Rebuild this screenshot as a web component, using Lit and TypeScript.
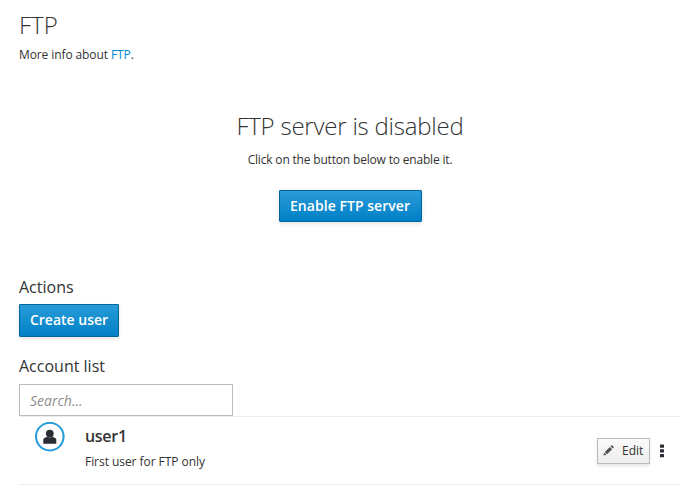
import { LitElement, html, css } from "lit";
import { customElement } from "lit/decorators.js";

@customElement("app-root")
export class AppRoot extends LitElement {
  static styles = css`
    :host {
      display: block;
      width: 690px;
      height: 498px;
      overflow: hidden;
      background: #fff;
      color: #333;
      font-family: "Open Sans", sans-serif;
      font-size: 12px;
      box-sizing: border-box;
      padding: 0 10px 0 19px;
    }
    h1, h2, h3, p { margin: 0; font-weight: 400; }
    .title { font-size: 24px; font-weight: 300; line-height: 33px; padding-top: 8px; margin-bottom: 5px; }
    .info { line-height: 17px; height: 17px; letter-spacing: -0.1px; }
    a { color: #0088ce; text-decoration: none; }
    .empty { display: flex; flex-direction: column; align-items: center; padding: 46px 0 0 10px; margin: 0 -10px 0 -19px; }
    .empty h2 { font-size: 24px; font-weight: 300; line-height: 33px; letter-spacing: -0.22px; }
    .empty p { line-height: 17px; margin-top: 9px; letter-spacing: -0.18px; }
    .btn {
      box-sizing: border-box;
      display: inline-flex;
      align-items: center;
      justify-content: center;
      height: 33px;
      padding: 0 10px 2px;
      border: 1px solid #00659c;
      border-radius: 1px;
      background: linear-gradient(#2a9bd8, #0080c6);
      color: #fff;
      font: 600 14px "Open Sans", sans-serif;
      white-space: nowrap;
      box-shadow: 0 2px 4px rgba(3,3,3,.1);
    }
    .empty .btn { margin-top: 22px; width: 143px; height: 32px; letter-spacing: 0.05px; }
    .sec { font-size: 16px; line-height: 22px; }
    .actions { margin-top: 54px; }
    .actions .btn { display: flex; margin-top: 6px; width: 100px; }
    .accounts { margin-top: 18px; }
    .search {
      box-sizing: border-box;
      display: flex;
      align-items: center;
      width: 214px;
      height: 32px;
      margin-top: 7px;
      padding: 0 10px;
      border: 1px solid #bbb;
      font-size: 14px;
      font-style: italic;
      color: #8b8d8f;
    }
    .row {
      box-sizing: border-box;
      display: flex;
      align-items: center;
      height: 69px;
      border-top: 1px solid #ededed;
      border-bottom: 1px solid #ededed;
    }
    .avatar { width: 30px; height: 30px; margin: 5px 0 0 16px; align-self: flex-start; }
    .who { flex: 1; margin-left: 20px; align-self: flex-start; }
    .name { font-size: 16px; font-weight: 600; line-height: 22px; margin-top: 8px; letter-spacing: -0.3px; }
    .desc { line-height: 17px; margin-top: 6px; letter-spacing: -0.05px; }
    .edit {
      box-sizing: border-box;
      display: inline-flex;
      align-items: center;
      gap: 8px;
      width: 53px;
      height: 26px;
      padding: 0 5px;
      border: 1px solid #bbb;
      background: linear-gradient(#fafafa, #ededed);
      box-shadow: 0 2px 3px rgba(3,3,3,.1);
      font-size: 12px;
    }
    .kebab { display: flex; margin: 0 16px 0 10px; }
    .actionsCell { display: flex; align-items: center; }
  `;

  render() {
    return html`
      <h1 class="title">FTP</h1>
      <p class="info">More info about <a href="#">FTP</a>.</p>
      <section class="empty">
        <h2>FTP server is disabled</h2>
        <p>Click on the button below to enable it.</p>
        <div class="btn">Enable FTP server</div>
      </section>
      <section class="actions">
        <h3 class="sec">Actions</h3>
        <div class="btn">Create user</div>
      </section>
      <section class="accounts">
        <h3 class="sec">Account list</h3>
        <div class="search">Search...</div>
      </section>
      <div class="row">
        <svg class="avatar" viewBox="0 0 30 30">
          <circle cx="14.8" cy="14.6" r="13.8" fill="#fff" stroke="#1f9bd8" stroke-width="2"/>
          <ellipse cx="14.8" cy="11.6" rx="3.9" ry="3.9" fill="#292e34"/>
          <path d="M8.300 21.800v-4.300c0-1.400 2.700-2.300 4.200-2.700l2.300 1 2.300-1c1.500.4 4.200 1.300 4.200 2.700v4.300z" fill="#292e34"/>
        </svg>
        <div class="who">
          <div class="name">user1</div>
          <div class="desc">First user for FTP only</div>
        </div>
        <div class="actionsCell">
          <div class="edit">
            <svg width="11" height="11" viewBox="0 0 12 12">
              <path d="M0.500 11.500l.8-3.200 2.400 2.400z M2 7.600l5.500-5.500 2.400 2.400-5.500 5.500z M8.200 1.400l.9-.9c.3-.3.700-.3 1 0l1.400 1.400c.3.3.3.700 0 1l-.9.900z" fill="#4d5258"/>
            </svg>
            <span>Edit</span>
          </div>
          <svg class="kebab" width="4" height="14" viewBox="0 0 4 14">
            <rect x="0" y="0.500" width="4" height="3.300" rx=".6" fill="#292e34"/>
            <rect x="0" y="5.200" width="4" height="3.300" rx=".6" fill="#292e34"/>
            <rect x="0" y="10" width="4" height="3.300" rx=".6" fill="#292e34"/>
          </svg>
        </div>
      </div>
    `;
  }
}
